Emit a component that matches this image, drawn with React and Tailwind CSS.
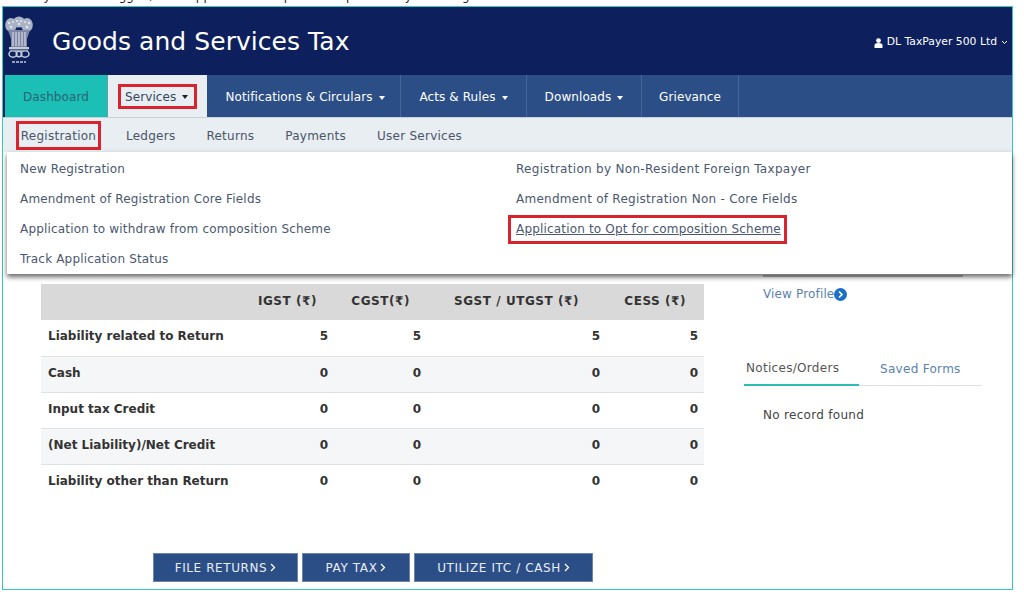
const font = "font-['DejaVu_Sans',Verdana,sans-serif]";

function Emblem() {
  return (
    <svg width="28" height="50" viewBox="0 0 28 50" className="shrink-0">
      <g fill="#aab2c6">
        <ellipse cx="14" cy="6" rx="6" ry="5.5" />
        <ellipse cx="6" cy="9" rx="5.8" ry="7" />
        <ellipse cx="22" cy="9" rx="5.8" ry="7" />
        <path d="M3 14h22l-3 9v8H6v-8z" fill="#7e88a6" />
        <rect x="4" y="31" width="20" height="2.4" fill="#c4cad8" />
      </g>
      <g fill="#e3e6ee">
        <circle cx="12" cy="5" r="1.1" /><circle cx="16" cy="5" r="1.1" /><circle cx="14" cy="8" r="1.2" />
        <circle cx="4" cy="7" r="1.2" /><circle cx="8" cy="6" r="1" /><circle cx="6" cy="11" r="1.3" />
        <circle cx="24" cy="7" r="1.2" /><circle cx="20" cy="6" r="1" /><circle cx="22" cy="11" r="1.3" />
      </g>
      <g stroke="#e3e6ee" strokeWidth="1" fill="none">
        <path d="M8 16v14M11 16v14M14 16v14M17 16v14M20 16v14" />
      </g>
      <g stroke="#c4cad8" strokeWidth="1.5" fill="none">
        <ellipse cx="8" cy="38" rx="4" ry="3.2" />
        <circle cx="14" cy="38" r="2.8" />
        <ellipse cx="20" cy="38" rx="4" ry="3.2" />
      </g>
      <path d="M5 34.5h18" stroke="#8f98b2" strokeWidth="1" />
      <path d="M7 46h14" stroke="#c4cad8" strokeWidth="1.6" strokeDasharray="3 1" />
    </svg>
  );
}

const Caret = ({ c = "border-t-white" }) => (
  <span className={`inline-block ml-[6px] align-middle w-0 h-0 border-x-[3.5px] border-x-transparent border-t-[4px] ${c}`} />
);

const NavItem = ({ children, caret, w }) => (
  <div className={`flex items-center justify-center pt-[2px] border-r border-[#47679a] ${w}`}>
    <span>{children}{caret && <Caret />}</span>
  </div>
);

const rows = [
  ["Liability related to Return", 5, "bg-white"],
  ["Cash", 0, "bg-[#f4f6f7]"],
  ["Input tax Credit", 0, "bg-white"],
  ["(Net Liability)/Net Credit", 0, "bg-[#f4f6f7]"],
  ["Liability other than Return", 0, "bg-white"],
];

export default function App() {
  return (
    <div className={`${font} w-[1024px] h-[604px] bg-white overflow-hidden text-[12px]`}>
      <div className="h-[6px] overflow-hidden">
        <div className="mt-[-11px] ml-[5px] text-[12px] leading-[14px] text-[#222] whitespace-nowrap">
          Already the user logged, then Application to Opt for composition by following
        </div>
      </div>
      <div className="ml-[2px] w-[1011px] h-[584px] border border-[#35c8c0]">
        <header className="h-[68px] bg-[#0d1f5c] flex items-center justify-between pl-[2px] pr-[4px]">
          <div className="flex items-center gap-[19px]">
            <Emblem />
            <span className="text-[25px] text-white pt-[2px] tracking-[0.05px]">Goods and Services Tax</span>
          </div>
          <div className="text-[10.8px] text-white flex items-center gap-[4px] pt-[3px]">
            <svg width="9" height="10" viewBox="0 0 9 10"><circle cx="4.5" cy="2.6" r="2.4" fill="#fff" /><path d="M0.5 10V7.2C0.5 5.8 2 5 4.5 5s4 .8 4 2.2V10z" fill="#fff" /></svg>
            <span>DL TaxPayer 500 Ltd</span>
            <svg width="7" height="5" viewBox="0 0 7 5"><path d="M1 1l2.5 2.5L6 1" stroke="#fff" fill="none" /></svg>
          </div>
        </header>
        <nav className="h-[43px] bg-[#2c4e86] text-white flex border-b border-[#c9d0d8] tracking-[0.1px]">
          <div className="w-[2px] bg-[#0d1f5c]" />
          <div className="w-[103px] bg-[#1cbfb5] text-[#2a6475] flex items-center justify-center pt-[2px] border-r border-[#5fa3a8]">Dashboard</div>
          <div className="w-[99px] bg-[#e9eef2] text-[#36465c] flex items-center justify-center pt-[1px]">
            <span className="border-[3px] border-[#d9232e] w-[79px] h-[25px] pl-[4px] pt-[1px] flex items-center">Services<Caret c="border-t-[#222]" /></span>
          </div>
          <NavItem caret w="w-[194px]"><span className="ml-[3px]">Notifications &amp; Circulars</span></NavItem>
          <NavItem caret w="w-[126px]">Acts &amp; Rules</NavItem>
          <NavItem caret w="w-[115px]">Downloads</NavItem>
          <NavItem w="w-[97px]">Grievance</NavItem>
        </nav>
        <div className="relative h-[34px] bg-[#e9eef2] text-[#4a5568] flex items-center pl-[13px] tracking-[0.25px]">
          <span className="border-[3px] border-[#d9232e] h-[29px] w-[85px] pt-[1px] flex items-center justify-center">Registration</span>
          <div className="flex ml-[25px] gap-[31px] pt-[1px]">
            <span>Ledgers</span>
            <span>Returns</span>
            <span>Payments</span>
            <span>User Services</span>
          </div>
          <div className="absolute left-[4px] right-0 top-[34px] h-[122px] z-10 bg-white shadow-[0_3px_5px_rgba(0,0,0,0.6)] text-[#4a5870] tracking-[0.17px] grid grid-cols-[496px_1fr] auto-rows-[30px] pt-[2px] pl-[13px] items-center">
            <span>New Registration</span>
            <span className="tracking-[0.3px]">Registration by Non-Resident Foreign Taxpayer</span>
            <span>Amendment of Registration Core Fields</span>
            <span className="tracking-[0.25px]">Amendment of Registration Non - Core Fields</span>
            <span>Application to withdraw from composition Scheme</span>
            <span className="justify-self-start -ml-[8px] border-[3px] border-[#d9232e] h-[29px] pl-[5px] pr-[3px] flex items-center"><span className="underline">Application to Opt for composition Scheme</span></span>
            <span>Track Application Status</span>
          </div>
        </div>

        <main className="flex pt-[132px] pl-[38px]">
          <div className="w-[663px]">
            <table className="w-[663px] table-fixed border-collapse text-[#333] font-bold">
              <thead>
                <tr className="h-[36px] bg-[#d9d9d9] text-right tracking-[0.55px]">
                  <th className="w-[200px]"></th>
                  <th className="w-[93px] pr-[17px] pb-[3px]">IGST (₹)</th>
                  <th className="w-[93px] pr-[17px] pb-[3px]">CGST(₹)</th>
                  <th className="w-[179px] pr-[27px] pb-[3px]">SGST / UTGST (₹)</th>
                  <th className="w-[98px] pr-[18px] pb-[3px]">CESS (₹)</th>
                </tr>
              </thead>
              <tbody>
                {rows.map(([label, v, bg]) => (
                  <tr key={label} className={`h-[36px] border-b border-[#dfe2e5] last:border-b-0 ${bg}`}>
                    <td className="pl-[7px] pb-[3px] whitespace-nowrap">{label}</td>
                    <td className="text-right pr-[6px] pb-[3px]">{v}</td>
                    <td className="text-right pr-[6px] pb-[3px]">{v}</td>
                    <td className="text-right pr-[6px] pb-[3px]">{v}</td>
                    <td className="text-right pr-[6px] pb-[3px]">{v}</td>
                  </tr>
                ))}
              </tbody>
            </table>
            <div className="flex gap-[4px] mt-[53px] ml-[112px] text-[#e8edf5] text-[12px] tracking-[0.6px]">
              {[["FILE RETURNS", "w-[145px]"], ["PAY TAX", "w-[108px]"], ["UTILIZE ITC / CASH", "w-[179px]"]].map(([t, w]) => (
                <div key={t} className={`${w} h-[29px] bg-[#2c4e86] border border-[#6f86a8] flex items-center justify-center gap-[3px]`}>
                  {t}
                  <svg width="6" height="9" viewBox="0 0 6 9"><path d="M1 1l3.5 3.5L1 8" stroke="#fff" strokeWidth="1.3" fill="none" /></svg>
                </div>
              ))}
            </div>
          </div>
          <aside className="w-[238px] ml-[40px] -mt-[9px] tracking-[0.3px]">
            <div className="ml-[19px] w-[200px] h-[2px] bg-[#bbbbbb]" />
            <div className="pl-[19px] flex items-center text-[#5a82ad] h-[20px] mt-[7px] tracking-[0.15px]">
              View Profile
              <svg width="13" height="13" viewBox="0 0 13 13"><circle cx="6.5" cy="6.5" r="6.5" fill="#1a6fc9" /><path d="M5 3.5l3 3-3 3" stroke="#fff" strokeWidth="1.6" fill="none" /></svg>
            </div>
            <div className="flex mt-[52px] h-[30px] border-b border-[#dfe2e5]">
              <div className="w-[115px] h-[30px] border-b-2 border-[#2cbcb2] text-[#555] pl-[2px] pb-[5px] flex items-center">Notices/Orders</div>
              <div className="pl-[21px] pb-[4px] text-[#5a82ad] flex items-center">Saved Forms</div>
            </div>
            <div className="pl-[19px] mt-[20px] text-[#444]">No record found</div>
          </aside>
        </main>
      </div>
    </div>
  );
}
